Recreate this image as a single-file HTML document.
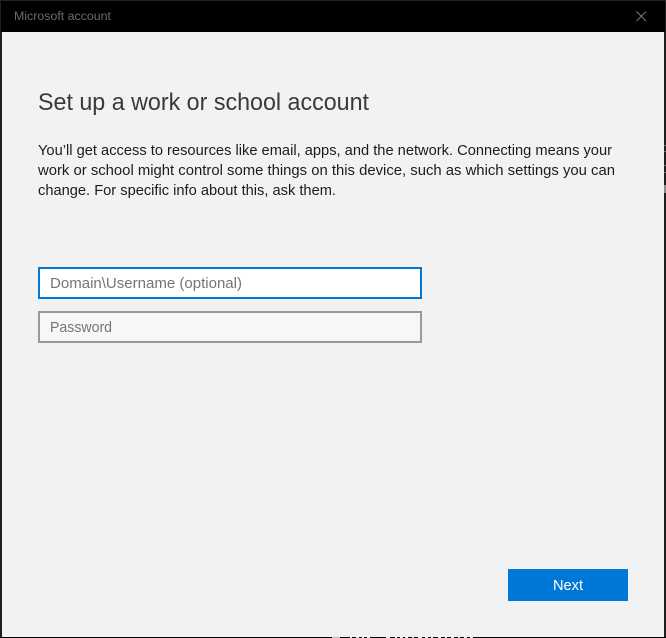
<!DOCTYPE html>
<html lang="en">
<head>
<meta charset="utf-8">
<title>Microsoft account</title>
<style>
html,body{margin:0;padding:0;width:666px;height:638px;overflow:hidden;background:#1c1c1c}
svg{display:block}
text{font-family:"Liberation Sans",sans-serif}
</style>
</head>
<body>
<svg width="666" height="638" viewBox="0 0 666 638" xmlns="http://www.w3.org/2000/svg">
  <rect width="666" height="638" fill="#1f1f1f"/>
  <rect x="2" y="32" width="662" height="605" fill="#f2f2f2"/>
  <rect x="0" y="0" width="666" height="1" fill="#222"/>
  <rect x="1" y="1" width="664" height="31" fill="#000"/>
  <rect x="0" y="637" width="666" height="1" fill="#000"/>
  <text x="14" y="20" font-size="11.5" fill="#6b6b6b" textLength="97" lengthAdjust="spacingAndGlyphs">Microsoft account</text>
  <path d="M636.5 11.5 L646 21 M646 11.5 L636.5 21" stroke="#7a7a7a" stroke-width="1" fill="none"/>

  <text x="38" y="110" font-size="24" fill="#3a3a3a" textLength="331" lengthAdjust="spacingAndGlyphs">Set up a work or school account</text>
  <text x="38" y="155" font-size="15" fill="#1c1c1c" textLength="574" lengthAdjust="spacingAndGlyphs">You’ll get access to resources like email, apps, and the network. Connecting means your</text>
  <text x="38" y="175" font-size="15" fill="#1c1c1c" textLength="577" lengthAdjust="spacingAndGlyphs">work or school might control some things on this device, such as which settings you can</text>
  <text x="38" y="195" font-size="15" fill="#1c1c1c" textLength="298" lengthAdjust="spacingAndGlyphs">change. For specific info about this, ask them.</text>

  <rect x="39" y="268" width="382" height="30" fill="#fff" stroke="#0078d7" stroke-width="2"/>
  <text x="50" y="288" font-size="15" fill="#757575" textLength="192" lengthAdjust="spacingAndGlyphs">Domain\Username (optional)</text>
  <rect x="39" y="312" width="382" height="30" fill="#f7f7f7" stroke="#999" stroke-width="2"/>
  <text x="50" y="332" font-size="15" fill="#757575" textLength="62" lengthAdjust="spacingAndGlyphs">Password</text>

  <rect x="508" y="569" width="120" height="32" fill="#0078d7"/>
  <text x="568" y="590" font-size="15" fill="#fff" text-anchor="middle" textLength="30" lengthAdjust="spacingAndGlyphs">Next</text>

  <rect x="332" y="637" width="8" height="1" fill="#bdbdbd"/>
  <path d="M350 637.5h2M356 637.5h3M362 637.5h2M367 637.5h3M386 637.5h4M395 637.5h2M400 637.5h3M405 637.5h3M412 637.5h2M418 637.5h4M425 637.5h3M431 637.5h2M438 637.5h3M445 637.5h2M451 637.5h3M458 637.5h2M464 637.5h3M470 637.5h3" stroke="#e6e6e6" stroke-width="1" fill="none"/>
  <path d="M664 145.5h2M664 151.5h2M664 165.5h2M664 172.5h2" stroke="#6e6e6e" stroke-width="1" fill="none"/>
  <rect x="664" y="185" width="2" height="8" fill="#8a8a8a"/>
</svg>
</body>
</html>
